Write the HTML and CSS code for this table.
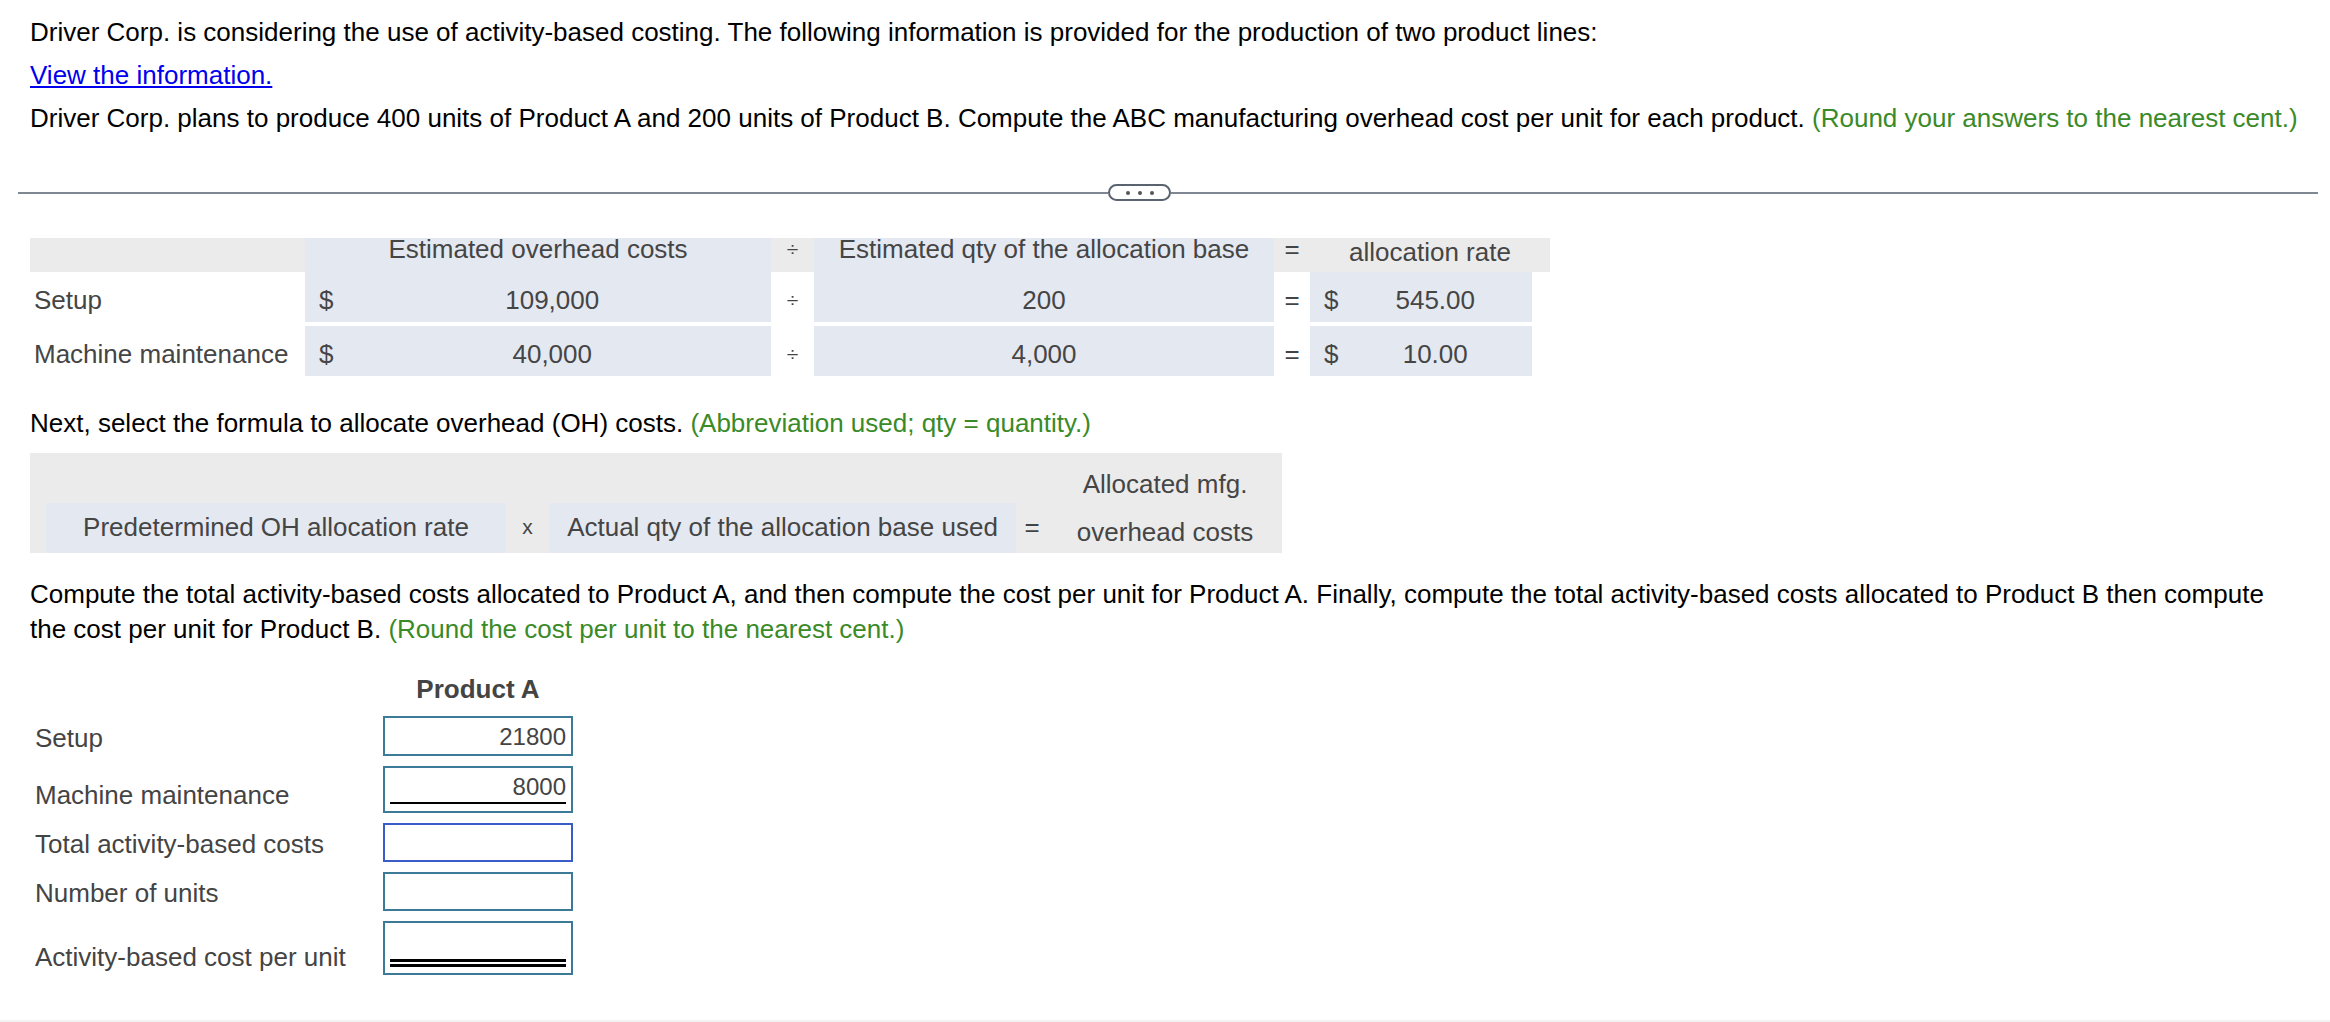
FILE: index.html
```html
<!DOCTYPE html>
<html>
<head lang="en">
    <meta charset="UTF-8">
    <title>Activity-based costing</title>
    <link rel="stylesheet" href="styles.css">
</head>
<body>
    <div class="intro">
        <p class="line">Driver Corp. is considering the use of activity-based costing. The following information is provided for the production of two product lines:</p>
        <p class="line"><a href="#" class="link">View the information.</a></p>
        <p class="line">Driver Corp. plans to produce 400 units of Product A and 200 units of Product B. Compute the ABC manufacturing overhead cost per unit for each product. <span class="hint">(Round your answers to the nearest cent.)</span></p>
    </div>

    <div class="divider">
        <span class="rule rule-left"></span>
        <button class="more"><i></i><i></i><i></i></button>
        <span class="rule"></span>
    </div>

    <div class="rates">
        <div class="row head">
            <div class="cell"></div>
            <div class="cell blue center">Estimated overhead costs</div>
            <div class="cell op small">&divide;</div>
            <div class="cell blue center">Estimated qty of the allocation base</div>
            <div class="cell op">=</div>
            <div class="cell center span2">allocation rate</div>
        </div>
        <div class="rows">
            <div class="row">
                <div class="cell label">Setup</div>
                <div class="cell blue"><span class="cur">$</span><span class="num">109,000</span></div>
                <div class="cell op small">&divide;</div>
                <div class="cell blue center">200</div>
                <div class="cell op">=</div>
                <div class="cell blue"><span class="cur">$</span><span class="num">545.00</span></div>
                <div class="cell"></div>
            </div>
            <div class="row">
                <div class="cell label">Machine maintenance</div>
                <div class="cell blue"><span class="cur">$</span><span class="num">40,000</span></div>
                <div class="cell op small">&divide;</div>
                <div class="cell blue center">4,000</div>
                <div class="cell op">=</div>
                <div class="cell blue"><span class="cur">$</span><span class="num">10.00</span></div>
                <div class="cell"></div>
            </div>
        </div>
    </div>

    <p class="text next">Next, select the formula to allocate overhead (OH) costs. <span class="hint">(Abbreviation used; qty = quantity.)</span></p>

    <div class="formula">
        <div class="f-top">Allocated mfg.</div>
        <div class="f-cell blue">Predetermined OH allocation rate</div>
        <div class="f-cell op small">x</div>
        <div class="f-cell blue">Actual qty of the allocation base used</div>
        <div class="f-cell op">=</div>
        <div class="f-cell">overhead costs</div>
    </div>

    <p class="text compute">Compute the total activity-based costs allocated to Product A, and then compute the cost per unit for Product A. Finally, compute the total activity-based costs allocated to Product B then compute the cost per unit for Product B. <span class="hint">(Round the cost per unit to the nearest cent.)</span></p>

    <div class="product">
        <div class="p-row">
            <div></div>
            <div class="p-head">Product A</div>
        </div>
        <div class="p-row">
            <div class="p-label">Setup</div>
            <div class="field"><div class="val">21800</div></div>
        </div>
        <div class="p-row">
            <div class="p-label">Machine maintenance</div>
            <div class="field sub"><div class="val">8000</div></div>
        </div>
        <div class="p-row">
            <div class="p-label">Total activity-based costs</div>
            <div class="field empty focus"></div>
        </div>
        <div class="p-row">
            <div class="p-label">Number of units</div>
            <div class="field empty"></div>
        </div>
        <div class="p-row">
            <div class="p-label">Activity-based cost per unit</div>
            <div class="field total"><div class="val"></div></div>
        </div>
    </div>

    <div class="footer"></div>
</body>
</html>
```

FILE: styles.css
```css
*{
    box-sizing: border-box;
}
body{
    margin: 0;
    font-family: "Liberation Sans", Arial, sans-serif;
    font-size: 26px;
    color: #000;
    background: #fff;
}
p{
    margin: 0;
}
.hint{
    color: #3a8a28;
}

/* intro text */
.intro{
    padding: 11px 30px 0 30px;
}
.line{
    line-height: 43px;
    white-space: nowrap;
}
.link{
    color: #0000ee;
    text-decoration: underline;
}

/* divider with the ... button */
.divider{
    display: flex;
    align-items: center;
    height: 17px;
    margin: 44px 12px 0 18px;
}
.rule{
    flex: 1;
    height: 2px;
    background: #7f8793;
}
.rule-left{
    flex: 0 0 1090px;
}
.more{
    display: flex;
    justify-content: center;
    align-items: center;
    gap: 8px;
    width: 63px;
    height: 17px;
    padding: 0;
    border: 2px solid #5a6370;
    border-radius: 9px;
    background: #fff;
}
.more i{
    width: 4px;
    height: 4px;
    border-radius: 50%;
    background: #555;
}

/* allocation rate table */
.rates{
    margin: 37px 0 0 30px;
    color: #454545;
}
.rows{
    display: flex;
    flex-direction: column;
    gap: 4px;
}
.row{
    display: grid;
    grid-template-columns: 275px 466px 43px 460px 36px 222px 18px;
    height: 50px;
}
.row.head{
    height: 34px;
    width: 1520px;
    background: #ebebeb;
}
.cell{
    display: flex;
    align-items: center;
    padding-top: 6px;
}
.head .cell{
    padding-top: 0;
    padding-bottom: 12px;
    line-height: 22px;
}
.head .span2{
    padding-bottom: 6px;
}
.blue{
    background: #e4e8f1;
}
.center{
    justify-content: center;
}
.span2{
    grid-column: span 2;
}
.op{
    justify-content: center;
    color: #444;
}
.small{
    font-size: 21px;
}
.label{
    padding-left: 4px;
}
.cur{
    padding-left: 14px;
}
.num{
    flex: 1;
    text-align: center;
}

/* formula */
.text{
    margin-left: 30px;
}
.next{
    margin-top: 30px;
    line-height: 34px;
}
.formula{
    display: grid;
    grid-template-columns: 460px 43px 467px 32px 1fr;
    grid-template-rows: 50px 50px;
    width: 1252px;
    margin: 13px 0 0 30px;
    padding-left: 16px;
    background: #ebebeb;
    color: #454545;
}
.f-top{
    grid-column: 5;
    align-self: end;
    padding-bottom: 3px;
    text-align: center;
}
.f-cell{
    display: flex;
    justify-content: center;
    align-items: center;
    padding-bottom: 2px;
}
.f-cell:last-child{
    padding-top: 10px;
}

.compute{
    max-width: 2250px;
    margin-top: 24px;
    line-height: 35px;
}

/* product A */
.product{
    display: flex;
    flex-direction: column;
    gap: 10px;
    margin: 25px 0 0 30px;
    color: #444;
}
.p-row{
    display: grid;
    grid-template-columns: 353px 190px;
    align-items: end;
}
.p-head{
    line-height: 34px;
    font-weight: bold;
    text-align: center;
}
.p-label{
    padding: 0 0 3px 5px;
    line-height: 30px;
}
.field{
    border: 2px solid #3c7a98;
    padding: 4px 5px 2px 5px;
    font-size: 24px;
}
.val{
    line-height: 30px;
    text-align: right;
}
.field.sub{
    padding-bottom: 7px;
}
.sub .val{
    border-bottom: 2px solid #000;
}
.field.empty{
    height: 39px;
}
.field.focus{
    border-color: #3a5cc7;
}
.field.total{
    padding-bottom: 6px;
}
.total .val{
    height: 40px;
    border-bottom: 8px double #000;
}

.footer{
    height: 40px;
    margin-top: 45px;
    background: #f2f2f2;
}
```
